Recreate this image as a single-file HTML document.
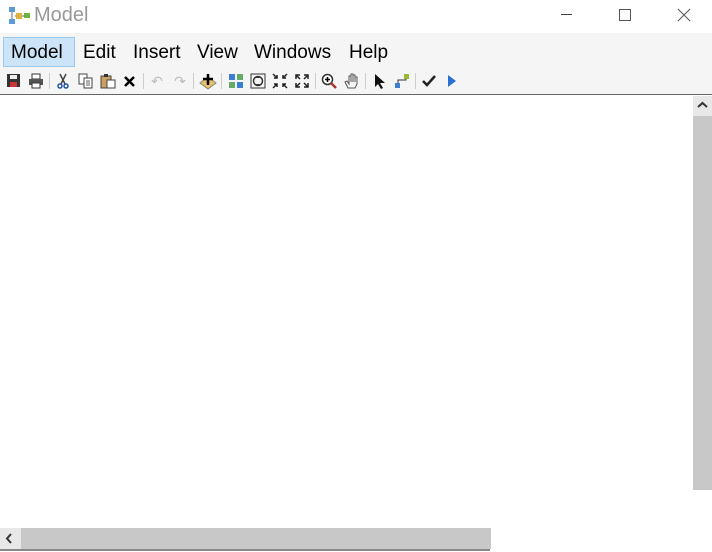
<!DOCTYPE html><html><head><style>
body{margin:0;width:712px;height:552px;background:#fff;position:relative;overflow:hidden;font-family:"Liberation Sans",sans-serif}
.a{position:absolute}
.menu span{position:absolute;top:39px;font-size:19px;color:#000;line-height:28px}
.i{position:absolute;top:73px;width:16px;height:16px;font-size:14px;line-height:16px;text-align:center}
.sep{position:absolute;top:73px;width:1px;height:16px;background:#ccc}
svg.a{top:73px}
</style></head><body>
<svg class="a" style="left:8px;top:6px" width="22" height="20"><rect x="1" y="1" width="6" height="5" fill="#5b9bd5"/><rect x="1" y="13" width="6" height="5" fill="#5b9bd5"/><rect x="8" y="7" width="6" height="6" fill="#e0b040"/><rect x="16" y="7" width="6" height="5" fill="#70b040"/><path d="M4 6v7M7 10h1M14 10h2" stroke="#666"/></svg>
<div class="a" style="left:34px;top:4px;font-size:20px;color:#999">Model</div>
<div class="a" style="left:561px;top:14px;width:11px;height:1px;background:#444"></div>
<div class="a" style="left:619px;top:9px;width:10px;height:10px;border:1px solid #555"></div>
<svg class="a" style="left:677px;top:8px" width="14" height="14"><path d="M1 1L13 13M13 1L1 13" stroke="#555"/></svg>
<div class="a" style="left:0;top:33px;width:712px;height:61px;background:#f5f5f5"></div>
<div class="a" style="left:0;top:94px;width:712px;height:1px;background:#666"></div>
<div class="a" style="left:3px;top:37px;width:70px;height:28px;background:#cce4f7;border:1px solid #99c9ef"></div>
<div class="menu"><span style="left:11px">Model</span><span style="left:83px">Edit</span><span style="left:133px">Insert</span><span style="left:197px">View</span><span style="left:254px">Windows</span><span style="left:349px">Help</span></div>
<svg class="a" style="left:6px" width="16" height="16"><rect x="1" y="1" width="13" height="13" fill="#333"/><rect x="4" y="2" width="7" height="4" fill="#eee"/><rect x="4" y="9" width="7" height="5" fill="#c33"/></svg>
<svg class="a" style="left:28px" width="16" height="16"><rect x="4" y="1" width="8" height="5" fill="#fff" stroke="#333"/><rect x="1" y="6" width="14" height="6" fill="#555"/><rect x="4" y="10" width="8" height="5" fill="#fff" stroke="#333"/></svg>
<div class="sep" style="left:49px"></div>
<svg class="a" style="left:55px" width="16" height="16"><path d="M5 1L10 11M11 1L6 11" stroke="#444" stroke-width="1.5"/><circle cx="5" cy="13" r="2" fill="none" stroke="#25a" stroke-width="1.5"/><circle cx="11" cy="13" r="2" fill="none" stroke="#25a" stroke-width="1.5"/></svg>
<svg class="a" style="left:78px" width="16" height="16"><rect x="1" y="1" width="8" height="10" fill="#fff" stroke="#444"/><rect x="6" y="5" width="8" height="10" fill="#fff" stroke="#444"/><path d="M8 8h4M8 10h4M8 12h4" stroke="#666"/></svg>
<svg class="a" style="left:100px" width="16" height="16"><rect x="1" y="3" width="10" height="12" fill="#c9a060" stroke="#444"/><rect x="7" y="7" width="8" height="8" fill="#fff" stroke="#444"/><rect x="4" y="1" width="4" height="3" fill="#333"/></svg>
<svg class="a" style="left:122px" width="16" height="16"><path d="M3 4L12 13M12 4L3 13" stroke="#000" stroke-width="2.5"/></svg>
<div class="sep" style="left:143px"></div>
<div class="i" style="left:149px;color:#bbb">↶</div>
<div class="i" style="left:172px;color:#bbb">↷</div>
<div class="sep" style="left:193px"></div>
<svg class="a" style="left:199px" width="18" height="18"><path d="M9 4L17 10L9 16L1 10Z" fill="#e8c070" stroke="#886"/><path d="M9 1v11M4 6h10" stroke="#000" stroke-width="2.5"/></svg>
<div class="sep" style="left:221px"></div>
<svg class="a" style="left:228px" width="16" height="16"><rect x="1" y="1" width="6" height="6" fill="#3a7fd0"/><rect x="9" y="1" width="6" height="6" fill="#6a6"/><rect x="1" y="9" width="6" height="6" fill="#6a6"/><rect x="9" y="9" width="6" height="6" fill="#3a7fd0"/></svg>
<svg class="a" style="left:250px" width="16" height="16"><rect x="1" y="1" width="14" height="14" fill="none" stroke="#333"/><circle cx="8" cy="8" r="4.5" fill="none" stroke="#333" stroke-width="1.5"/><path d="M8 3l-2 2h4zM8 13l-2-2h4z" fill="#333"/></svg>
<svg class="a" style="left:272px" width="16" height="16" stroke="#222" stroke-width="1.5"><path d="M1 1l4 4M5 2v3H2M15 1l-4 4M11 2v3h3M1 15l4-4M5 14v-3H2M15 15l-4-4M11 14v-3h3" fill="none"/></svg>
<svg class="a" style="left:294px" width="16" height="16" stroke="#222" stroke-width="1.5" fill="none"><path d="M2 6V2h4M2 2l4 4M14 6V2h-4M14 2l-4 4M2 10v4h4M2 14l4-4M14 10v4h-4M14 14l-4-4"/></svg>
<div class="sep" style="left:315px"></div>
<svg class="a" style="left:321px" width="16" height="16"><circle cx="6.5" cy="6.5" r="5" fill="#fff" stroke="#333" stroke-width="1.5"/><path d="M4 6.5h5M6.5 4v5" stroke="#000" stroke-width="1.5"/><path d="M10 10l5 5" stroke="#a33" stroke-width="2.5"/></svg>
<svg class="a" style="left:344px" width="16" height="16" fill="none" stroke="#555"><path d="M4 15L1 9l2-1 2 3V3h2v6V1h2v8V2h2v7V4h2v7l-2 4z"/></svg>
<div class="sep" style="left:365px"></div>
<svg class="a" style="left:373px" width="16" height="16"><path d="M2 1v13l3-3 3 5 2-1-3-5h5z" fill="#111"/></svg>
<svg class="a" style="left:394px" width="16" height="16"><rect x="1" y="10" width="5" height="5" fill="#3a7fd0"/><rect x="10" y="1" width="5" height="5" fill="#9b3"/><path d="M4 10V7h8V6" stroke="#333" fill="none"/></svg>
<div class="sep" style="left:415px"></div>
<svg class="a" style="left:421px" width="16" height="16"><path d="M2 8l4 4 8-9" stroke="#222" stroke-width="2.5" fill="none"/></svg>
<svg class="a" style="left:444px" width="16" height="16"><path d="M4 2L12 8L4 14Z" fill="#2a70d0"/></svg>
<div class="a" style="left:693px;top:96px;width:19px;height:20px;background:#e8e8e8"></div>
<svg class="a" style="left:696px;top:100px" width="13" height="10"><path d="M2 7L6.5 3L11 7" stroke="#333" stroke-width="2" fill="none"/></svg>
<div class="a" style="left:693px;top:116px;width:19px;height:374px;background:#c8c8c8"></div>
<div class="a" style="left:0;top:528px;width:21px;height:21px;background:#e8e8e8"></div>
<svg class="a" style="left:4px;top:532px" width="10" height="13"><path d="M7 2L3 6.5L7 11" stroke="#333" stroke-width="2" fill="none"/></svg>
<div class="a" style="left:21px;top:528px;width:470px;height:21px;background:#c8c8c8"></div>
<div class="a" style="left:0;top:549px;width:490px;height:2px;background:#888"></div>
</body></html>
